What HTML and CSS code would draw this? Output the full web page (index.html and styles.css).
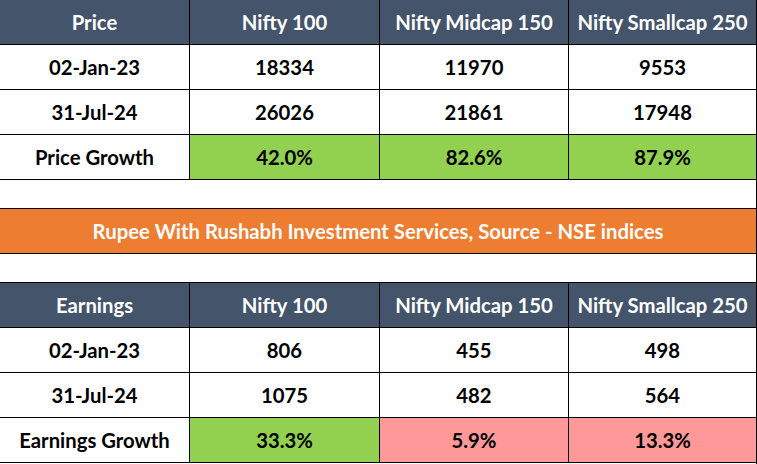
FILE: index.html
```html
<!DOCTYPE html>
<html>
<head>
<meta charset="utf-8">
<link rel="stylesheet" href="styles.css">
</head>
<body>
<div class="sheet">
  <div class="grid">
    <div class="cell head">Price</div>
    <div class="cell head">Nifty 100</div>
    <div class="cell head">Nifty Midcap 150</div>
    <div class="cell head last">Nifty Smallcap 250</div>

    <div class="cell">02-Jan-23</div>
    <div class="cell">18334</div>
    <div class="cell">11970</div>
    <div class="cell last">9553</div>

    <div class="cell">31-Jul-24</div>
    <div class="cell">26026</div>
    <div class="cell">21861</div>
    <div class="cell last">17948</div>

    <div class="cell">Price Growth</div>
    <div class="cell green">42.0%</div>
    <div class="cell green">82.6%</div>
    <div class="cell green last">87.9%</div>
  </div>

  <div class="gap"></div>
  <div class="banner">Rupee With Rushabh Investment Services, Source - NSE indices</div>
  <div class="gap"></div>

  <div class="grid second">
    <div class="cell head">Earnings</div>
    <div class="cell head">Nifty 100</div>
    <div class="cell head">Nifty Midcap 150</div>
    <div class="cell head last">Nifty Smallcap 250</div>

    <div class="cell">02-Jan-23</div>
    <div class="cell">806</div>
    <div class="cell">455</div>
    <div class="cell last">498</div>

    <div class="cell">31-Jul-24</div>
    <div class="cell">1075</div>
    <div class="cell">482</div>
    <div class="cell last">564</div>

    <div class="cell">Earnings Growth</div>
    <div class="cell green">33.3%</div>
    <div class="cell pink">5.9%</div>
    <div class="cell pink last">13.3%</div>
  </div>
</div>
</body>
</html>
```

FILE: styles.css
```css
html, body {
  margin: 0;
  padding: 0;
  background: #ffffff;
}

.sheet {
  width: 756px;
  height: 464px;
  border-right: 1px solid #000;
  font-family: Lato, "Open Sans", sans-serif;
  font-weight: 700;
  font-size: 20.3px;
  color: #000;
  overflow: hidden;
}

.grid {
  display: grid;
  grid-template-columns: 190px 190px 189px 187px;
  grid-auto-rows: 45px;
}

.grid.second {
  border-top: 1px solid #000;
}

.cell {
  display: flex;
  align-items: center;
  justify-content: center;
  border-right: 1px solid #000;
  border-bottom: 1px solid #000;
  white-space: nowrap;
}

.cell.last {
  border-right: none;
}

.head {
  background: #44546a;
  color: #ffffff;
}

.green {
  background: #92d050;
}

.pink {
  background: #ff9999;
}

.gap {
  height: 28px;
}

.banner {
  height: 44px;
  background: #ed7d31;
  color: #ffffff;
  border-top: 1px solid #000;
  border-bottom: 1px solid #000;
  display: flex;
  align-items: center;
  justify-content: center;
  white-space: nowrap;
}
```
